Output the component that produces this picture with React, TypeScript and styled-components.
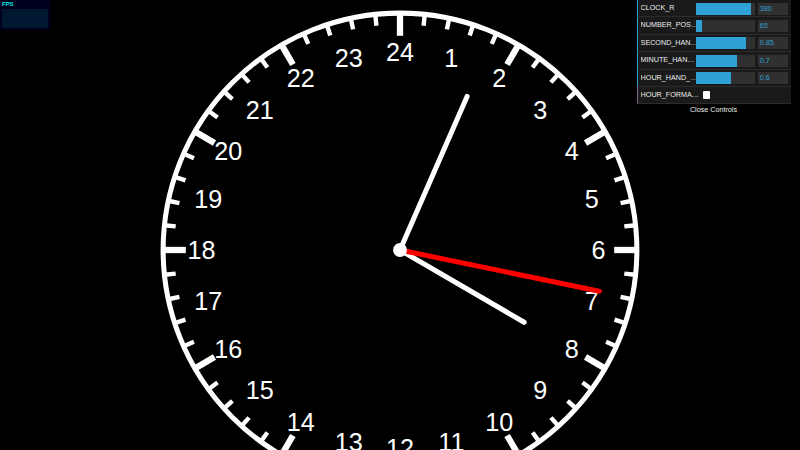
import styled, { createGlobalStyle } from "styled-components";

// page is shown at ~0.63 zoom, so every size below is the scaled one
const S = 0.63;

const GlobalStyle = createGlobalStyle`
  html, body {
    margin: 0;
    padding: 0;
    background: #000;
    overflow: hidden;
  }
`;

const Page = styled.div`
  width: 800px;
  height: 450px;
  background: #000;
`;

const ClockSvg = styled.svg`
  display: block;
  width: 800px;
  height: 450px;
`;

// stats.js box
const Stats = styled.div`
  position: fixed;
  top: 0;
  left: 0;
  width: 50px;
  height: 30px;
  background: #000022;
  opacity: 0.9;
`;

const StatsText = styled.div`
  padding: 1.2px 0 0 1.9px;
  height: 8.2px;
  font-family: "Liberation Sans", Arial, sans-serif;
  font-weight: bold;
  font-size: 6px;
  line-height: 6px;
  color: #00ffff;
`;

const StatsGraph = styled.div`
  margin-left: 1.9px;
  width: 46.6px;
  height: 18.9px;
  background: #001a38;
`;

// dat.gui panel
const Panel = styled.ul`
  position: fixed;
  top: 0;
  right: 9.5px;
  width: 154px;
  margin: 0;
  padding: 0;
  list-style: none;
  font-family: "Liberation Sans", Arial, sans-serif;
  font-size: 7.2px;
  color: #eee;
`;

const Row = styled.li<{ $accent: string }>`
  display: flex;
  align-items: flex-start;
  height: 16.4px;
  line-height: 16.4px;
  padding: 0 2.5px 0 3.1px;
  background: #1a1a1a;
  border-left: 1.9px solid ${(p) => p.$accent};
  border-bottom: 0.8px solid #2c2c2c;
  overflow: hidden;
`;

const Label = styled.span`
  width: 40%;
  flex: none;
  white-space: nowrap;
  overflow: hidden;
  text-overflow: ellipsis;
`;

const Control = styled.div`
  flex: 1;
  display: flex;
  justify-content: space-between;
  align-items: flex-start;
`;

const Slider = styled.div`
  width: 66%;
  height: 12px;
  margin: 2.5px 0 0 -3.15px;
  background: #303030;
`;

const SliderFill = styled.div`
  height: 100%;
  background: #2fa1d6;
`;

const NumberBox = styled.div`
  width: 26.4px;
  height: 12px;
  margin-top: 2.5px;
  padding: 0 1.9px;
  line-height: 12px;
  background: #303030;
  color: #2fa1d6;
`;

const Check = styled.span`
  display: block;
  width: 7.5px;
  height: 7.5px;
  margin: 4.4px 0 0 3px;
  border-radius: 1px;
  background: #fff;
`;

const CloseButton = styled.li`
  height: 12.6px;
  line-height: 12px;
  text-align: center;
  background: #000;
  color: #eee;
`;

interface IControl {
  name: string;
  value: number;
  min: number;
  max: number;
}

const controls: IControl[] = [
  { name: "CLOCK_R", value: 380, min: 0, max: 410 },
  { name: "NUMBER_POSITION", value: 65, min: 50, max: 200 },
  { name: "SECOND_HAND_LENGTH", value: 0.85, min: 0, max: 1 },
  { name: "MINUTE_HAND_LENGTH", value: 0.7, min: 0, max: 1 },
  { name: "HOUR_HAND_LENGTH", value: 0.6, min: 0, max: 1 },
];

const R = 380;
const NUMBER_POS = 65;

function polar(r: number, deg: number) {
  const a = (deg * Math.PI) / 180;
  return { x: r * Math.sin(a), y: -r * Math.cos(a) };
}

function Hand({ deg, len, color }: { deg: number; len: number; color: string }) {
  const p = polar(len, deg);
  return (
    <line x1={0} y1={0} x2={p.x} y2={p.y} stroke={color} strokeWidth={8} strokeLinecap="round" />
  );
}

function Clock() {
  const ticks = Array.from({ length: 60 }, (_, i) => i);
  const hours = Array.from({ length: 24 }, (_, i) => i);
  return (
    <ClockSvg viewBox="0 0 800 450">
      <g transform={`translate(400 250) scale(${S})`}>
        <circle r={R - 4} fill="none" stroke="#fff" strokeWidth={8} />
        {ticks.map((i) => {
          const long = i % 5 === 0;
          const a = polar(long ? 340 : 358, i * 6);
          const b = polar(R - 4, i * 6);
          return (
            <line key={i} x1={a.x} y1={a.y} x2={b.x} y2={b.y} stroke="#fff" strokeWidth={long ? 10 : 7} />
          );
        })}
        {hours.map((h) => {
          const p = polar(R - NUMBER_POS, h * 15);
          return (
            <text
              key={h}
              x={p.x}
              y={p.y}
              fill="#fff"
              fontSize={40}
              fontFamily="'Liberation Sans', Arial, sans-serif"
              textAnchor="middle"
              dominantBaseline="central"
            >
              {h === 0 ? 24 : h}
            </text>
          );
        })}
        <Hand deg={120.2} len={R * 0.6} color="#fff" />
        <Hand deg={23.6} len={R * 0.7} color="#fff" />
        <Hand deg={101.7} len={R * 0.85} color="#ff0000" />
        <circle r={11} fill="#fff" />
      </g>
    </ClockSvg>
  );
}

export default function App() {
  return (
    <Page>
      <GlobalStyle />
      <Clock />
      <Stats>
        <StatsText>FPS</StatsText>
        <StatsGraph />
      </Stats>
      <Panel>
        {controls.map((c) => (
          <Row key={c.name} $accent="#2fa1d6">
            <Label>{c.name}</Label>
            <Control>
              <Slider>
                <SliderFill style={{ width: `${((c.value - c.min) / (c.max - c.min)) * 100}%` }} />
              </Slider>
              <NumberBox>{c.value}</NumberBox>
            </Control>
          </Row>
        ))}
        <Row $accent="#806787">
          <Label>HOUR_FORMAT_24</Label>
          <Control>
            <Check />
          </Control>
        </Row>
        <CloseButton>Close Controls</CloseButton>
      </Panel>
    </Page>
  );
}
